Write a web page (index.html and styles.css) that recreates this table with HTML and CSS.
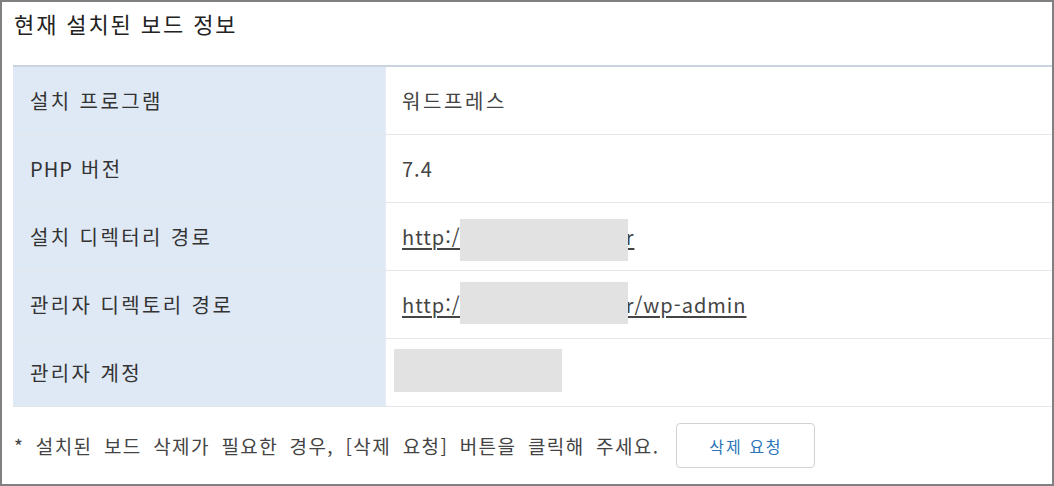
FILE: index.html
```html
<!DOCTYPE html>
<html lang="ko">
<head>
<meta charset="utf-8">
<link rel="stylesheet" href="styles.css">
</head>
<body>
<div class="frame">
  <h1 class="title">현재 설치된 보드 정보</h1>
  <div class="info">
    <div class="row">
      <div class="label">설치 프로그램</div>
      <div class="value">워드프레스</div>
    </div>
    <div class="row">
      <div class="label"><span class="latin">PHP</span>&nbsp;버전</div>
      <div class="value"><span class="latin">7.4</span></div>
    </div>
    <div class="row">
      <div class="label">설치 디렉터리 경로</div>
      <div class="value"><a class="link latin" href="#">http:/<span class="gap"></span>r</a><span class="redact r-dir"></span></div>
    </div>
    <div class="row">
      <div class="label">관리자 디렉토리 경로</div>
      <div class="value"><a class="link latin" href="#">http:/<span class="gap"></span>r/wp-admin</a><span class="redact r-admin"></span></div>
    </div>
    <div class="row">
      <div class="label">관리자 계정</div>
      <div class="value"><span class="redact r-account"></span></div>
    </div>
  </div>
  <div class="footer">
    <p class="note">* 설치된 보드 삭제가 필요한 경우, [삭제 요청] 버튼을 클릭해 주세요.</p>
    <button class="btn" type="button">삭제 요청</button>
  </div>
</div>
</body>
</html>
```
FILE: styles.css
```css
html, body {
  margin: 0;
  padding: 0;
  background: #ffffff;
}
body {
  font-family: "Noto Sans CJK KR", "Noto Sans", sans-serif;
  color: #333333;
}
.frame {
  box-sizing: border-box;
  width: 1054px;
  height: 486px;
  border: 2px solid #808080;
  display: flex;
  flex-direction: column;
  overflow: hidden;
}
.title {
  margin: 0;
  height: 63px;
  box-sizing: border-box;
  padding: 6px 0 0 12px;
  font-size: 22px;
  font-weight: 400;
  letter-spacing: 1.9px;
  line-height: 30px;
  color: #222222;
}
.info {
  margin-left: 11px;
  border-top: 2px solid #c9d4df;
}
.row {
  display: flex;
  height: 68px;
  box-sizing: border-box;
  border-bottom: 1px solid #e3e7eb;
}
.label {
  width: 373px;
  flex: none;
  box-sizing: border-box;
  background: #dfe9f5;
  padding-left: 17px;
  display: flex;
  align-items: center;
  font-size: 20px;
  letter-spacing: 2.4px;
  color: #333333;
  border-right: 1px solid #e6ecf2;
}
.value {
  position: relative;
  flex: 1;
  display: flex;
  align-items: center;
  padding-left: 16px;
  font-size: 20px;
  letter-spacing: 2.6px;
  color: #444444;
}
.latin {
  letter-spacing: 1px;
}
.link {
  color: #444444;
  text-decoration: underline;
  text-underline-offset: 3px;
  white-space: nowrap;
}
.gap {
  display: inline-block;
  width: 165px;
}
.redact {
  position: absolute;
  left: 74px;
  width: 168px;
  height: 42px;
  background: #e2e2e2;
}
.r-dir {
  top: 16px;
}
.r-admin {
  top: 11px;
}
.r-account {
  left: 8px;
  top: 10px;
  height: 43px;
}
.footer {
  flex: 1;
  display: flex;
  align-items: center;
  padding-left: 12px;
}
.note {
  margin: 0;
  font-size: 19px;
  letter-spacing: 1.4px;
  word-spacing: 4.8px;
  color: #444444;
}
.btn {
  margin-left: 17px;
  width: 139px;
  height: 45px;
  background: #ffffff;
  border: 1px solid #cfd3d7;
  border-radius: 4px;
  font-family: "Noto Sans CJK KR", "Noto Sans", sans-serif;
  font-size: 16px;
  letter-spacing: 2px;
  color: #2b74b8;
}
```
